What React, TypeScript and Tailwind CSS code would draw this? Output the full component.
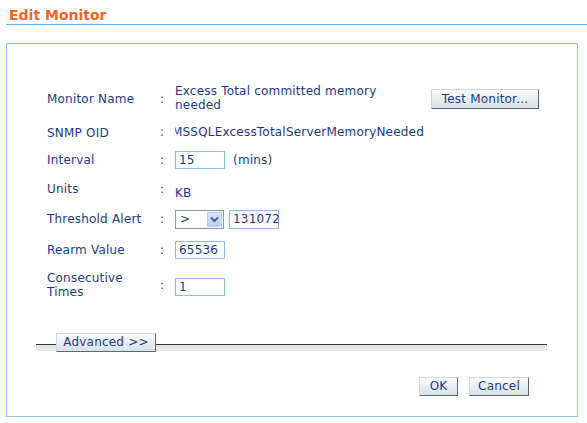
import React from "react";

const btn =
  "bg-gradient-to-b from-[#fbfcfd] to-[#d7e1e6] border border-t-[#d0d9de] border-l-[#d0d9de] border-r-[#56687a] border-b-[#56687a] text-[#1e3a8a] text-[12px] leading-[15px] flex items-center justify-center";

const input =
  "h-[18px] border border-[#8dbdea] bg-white text-[12px] leading-[16px] text-[#1d3a83] pl-[3px] flex items-center";

function Row({
  h,
  label,
  children,
  colonCls = "",
}: {
  h: string;
  label: React.ReactNode;
  children?: React.ReactNode;
  colonCls?: string;
}) {
  return (
    <div className={`flex items-center ${h}`}>
      <div className="w-[113px] leading-[14px]">{label}</div>
      <div className={`w-[15px] ${colonCls}`}>:</div>
      <div className="flex items-center">{children}</div>
    </div>
  );
}

export default function App() {
  return (
    <div className="w-[587px] h-[423px] bg-white overflow-hidden font-['DejaVu_Sans',sans-serif] text-[12px] leading-[15px] tracking-[0.2px] text-[#1d3a83]">
      <div className="h-[24px] pl-[9px] pt-[7px] text-[14px] leading-[17px] tracking-normal font-bold text-[#f26522]">
        Edit Monitor
      </div>
      <div className="ml-[6px] h-px bg-[#6ab2ee]" />
      <div className="mt-[18px] ml-[6px] w-[572px] h-[374px] border border-[#91c6f2]">
        <div className="pl-[40px] pt-[36px]">
          <Row h="h-[38px]" label="Monitor Name">
            <div className="w-[256px] leading-[14px] -mt-[3px]">
              <div className="w-[225px]">Excess Total committed memory needed</div>
            </div>
            <div className={`${btn} w-[108px] h-[20px]`}>Test Monitor...</div>
          </Row>
          <Row h="h-[29px]" label="SNMP OID">
            <div className="w-[249px] overflow-hidden flex justify-end whitespace-nowrap">
              <span className="shrink-0">MSSQLExcessTotalServerMemoryNeeded</span>
            </div>
          </Row>
          <Row h="h-[26px]" label="Interval">
            <div className={`${input} w-[50px]`}>15</div>
            <span className="ml-[8px]">(mins)</span>
          </Row>
          <Row h="h-[32px]" label="Units">
            <span className="mt-[8px]">KB</span>
          </Row>
          <Row h="h-[28px]" label="Threshold Alert">
            <div className="w-[49px] h-[19px] border border-[#7f9db9] bg-white flex items-center">
              <span className="pl-[4px] flex-1">&gt;</span>
              <div className="w-[15px] h-[15px] mr-px bg-gradient-to-b from-[#d9e5fe] to-[#bccff8] border border-[#b9cbf0] flex items-center justify-center">
                <svg width="9" height="7" viewBox="0 0 9 7">
                  <path d="M1 1.5 L4.5 5 L8 1.5" fill="none" stroke="#4d6185" strokeWidth="2" />
                </svg>
              </div>
            </div>
            <div className={`${input} w-[50px] ml-[5px] h-[19px]`}>131072</div>
          </Row>
          <Row h="h-[34px]" label="Rearm Value">
            <div className={`${input} w-[50px]`}>65536</div>
          </Row>
          <Row
            h="h-[36px]"
            label={
              <>
                Consecutive
                <br />
                Times
              </>
            }
          >
            <div className={`${input} w-[50px] mt-[4px]`}>1</div>
          </Row>
        </div>

        <div className="relative mt-[41px] ml-[29px] w-[511px]">
          <div className="h-px bg-[#333333]" />
          <div className="h-[6px] bg-[#e4e6e8]" />
          <div className={`${btn} absolute left-[20px] top-[-11px] w-[100px] h-[19px]`}>
            Advanced &gt;&gt;
          </div>
        </div>

        <div className="mt-[26px] flex pl-[412px] gap-[11px]">
          <div className={`${btn} w-[39px] h-[19px]`}>OK</div>
          <div className={`${btn} w-[60px] h-[19px]`}>Cancel</div>
        </div>
      </div>
    </div>
  );
}
